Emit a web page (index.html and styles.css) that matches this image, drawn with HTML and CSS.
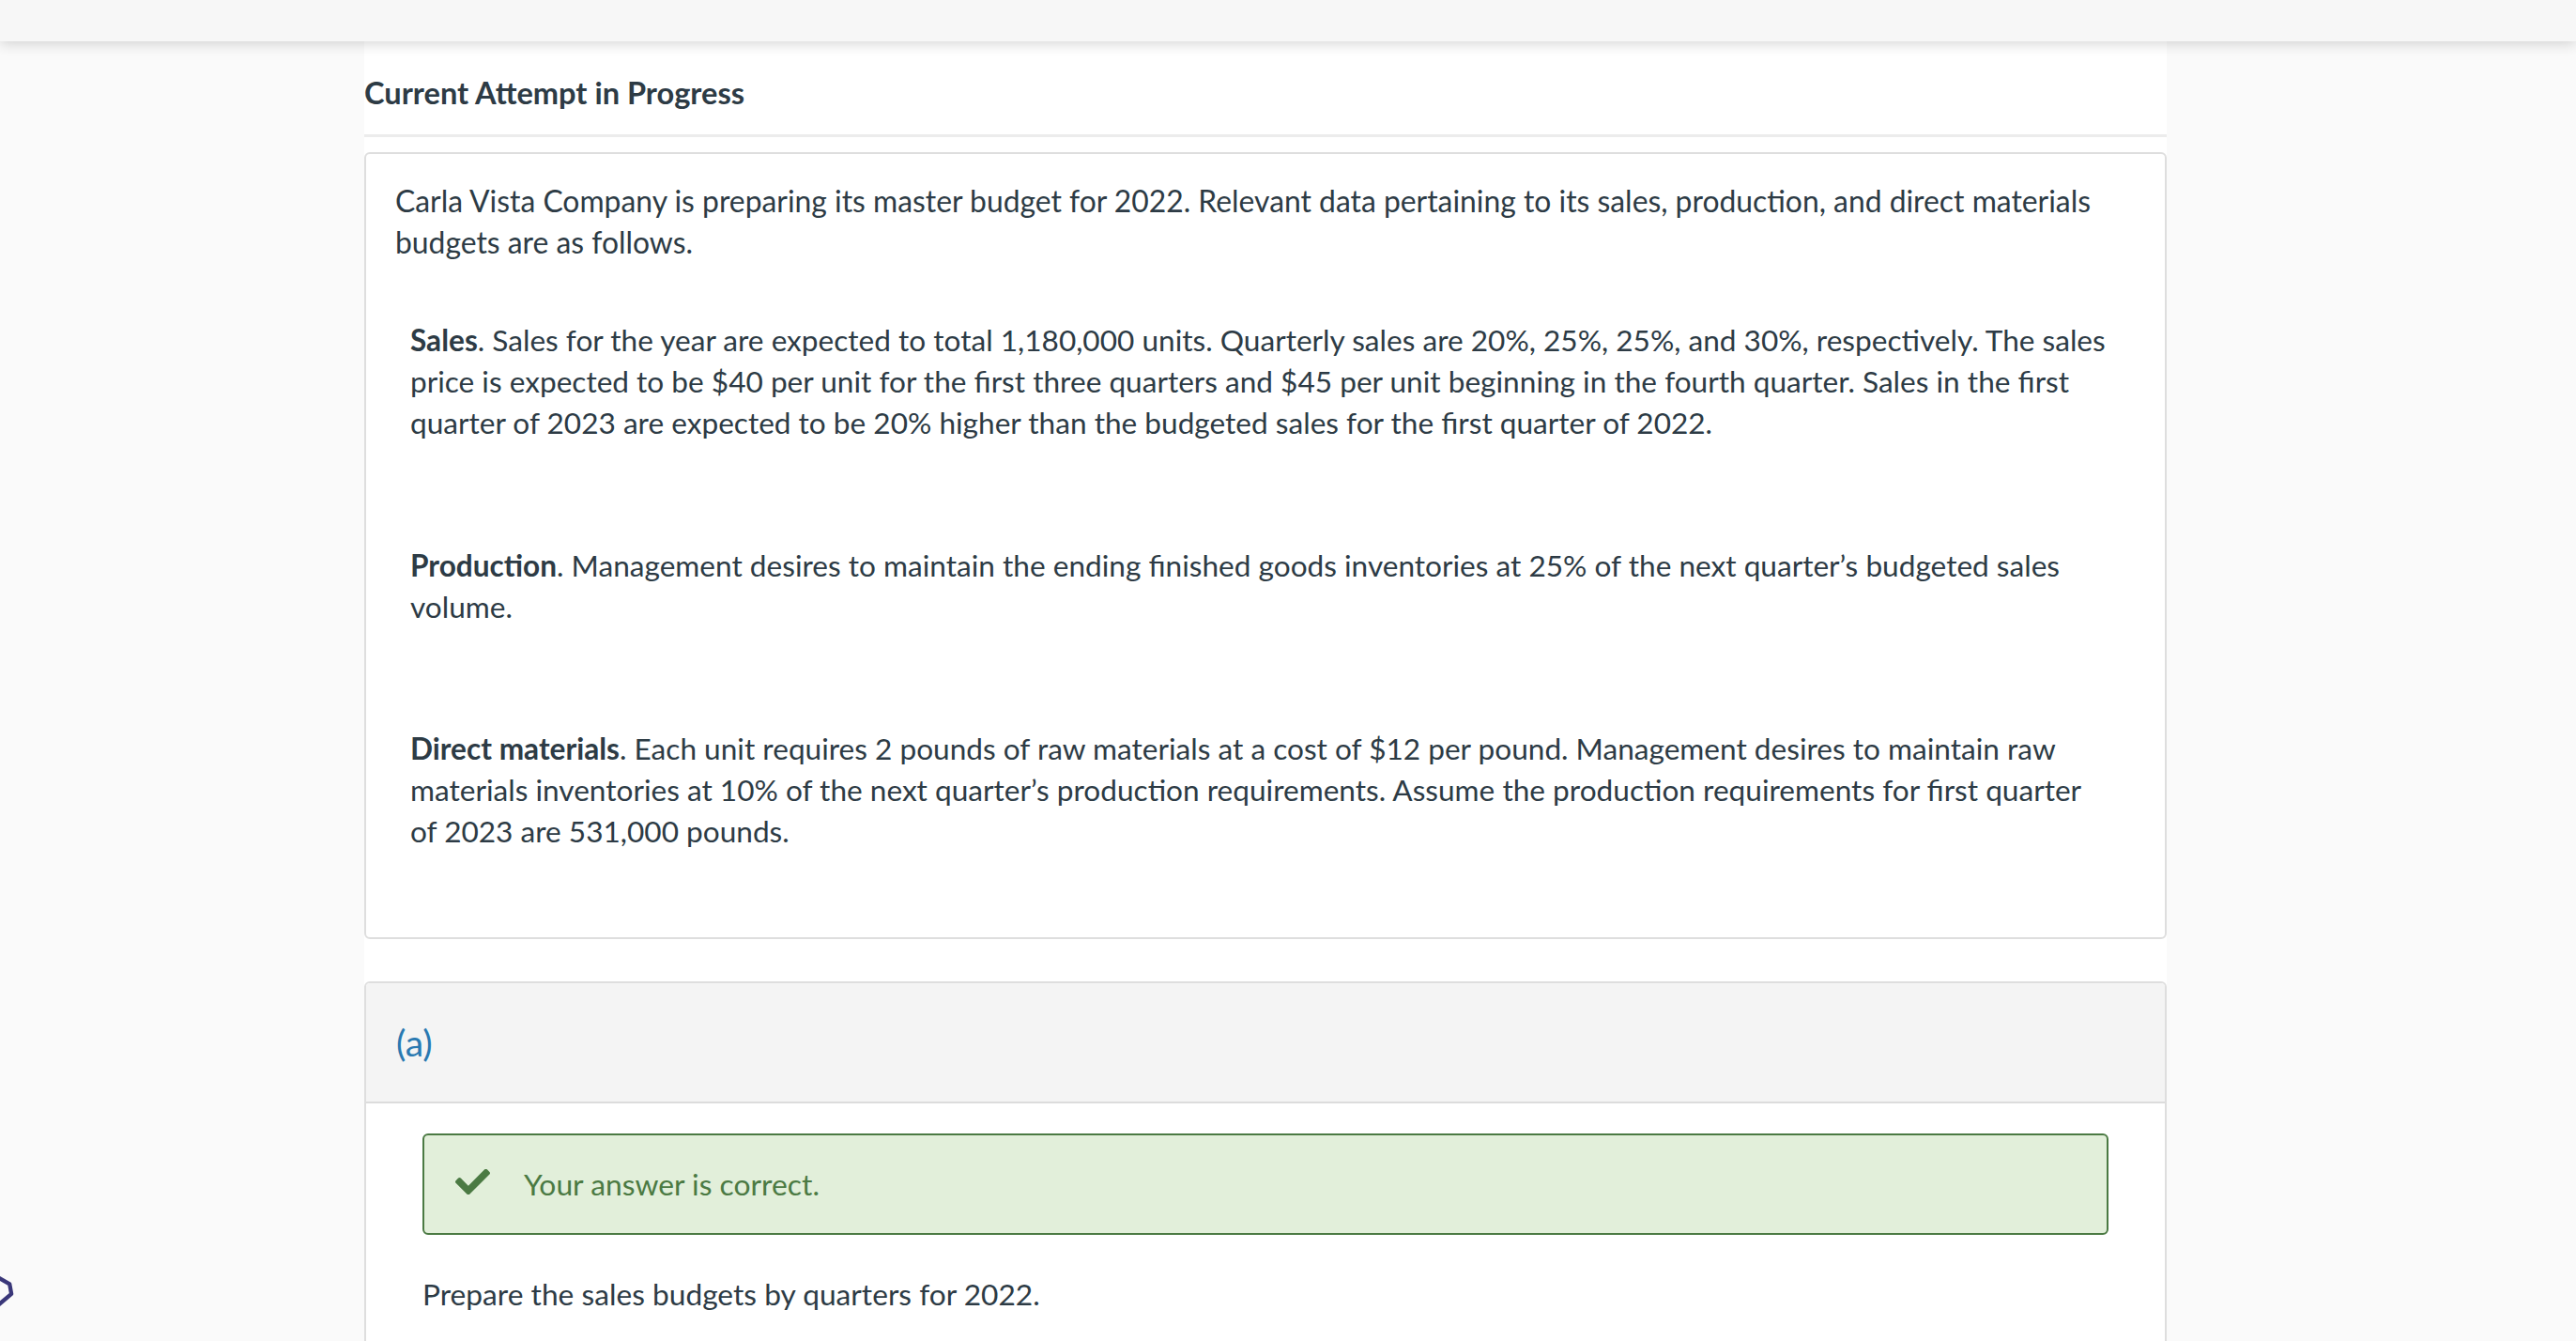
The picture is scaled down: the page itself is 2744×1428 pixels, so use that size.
FILE: index.html
```html
<!DOCTYPE html>
<html lang="en">
<head>
<meta charset="utf-8">
<title>Current Attempt in Progress</title>
<link rel="stylesheet" href="styles.css">
</head>
<body>
<header class="topbar"></header>
<div class="layout">
  <main class="main">
    <h1 class="attempt-title">Current Attempt in Progress</h1>
    <section class="card question">
      <p class="intro">Carla Vista Company is preparing its master budget for 2022. Relevant data pertaining to its sales, production, and direct materials budgets are as follows.</p>
      <p class="item item-sales"><strong>Sales</strong>. Sales for the year are expected to total 1,180,000 units. Quarterly sales are 20%, 25%, 25%, and 30%, respectively. The sales price is expected to be $40 per unit for the first three quarters and $45 per unit beginning in the fourth quarter. Sales in the first quarter of 2023 are expected to be 20% higher than the budgeted sales for the first quarter of 2022.</p>
      <p class="item item-prod"><strong>Production</strong>. Management desires to maintain the ending finished goods inventories at 25% of the next quarter’s budgeted sales volume.</p>
      <p class="item item-dm"><strong>Direct materials</strong>. Each unit requires 2 pounds of raw materials at a cost of $12 per pound. Management desires to maintain raw materials inventories at 10% of the next quarter’s production requirements. Assume the production requirements for first quarter of 2023 are 531,000 pounds.</p>
    </section>
    <section class="card part">
      <div class="part-head"><span class="part-label">(a)</span></div>
      <div class="part-body">
        <div class="feedback">
          <svg class="check" viewBox="0 0 512 370" aria-hidden="true"><path transform="translate(0,-70)" d="M173.898 439.404l-166.4-166.4c-9.997-9.997-9.997-26.206 0-36.204l36.203-36.204c9.997-9.998 26.207-9.998 36.204 0L192 312.69 432.095 72.596c9.997-9.997 26.207-9.997 36.204 0l36.203 36.204c9.997 9.997 9.997 26.206 0 36.204l-294.4 294.401c-9.998 9.997-26.207 9.997-36.204-.001z"/></svg>
          <span class="feedback-text">Your answer is correct.</span>
        </div>
        <p class="prompt">Prepare the sales budgets by quarters for 2022.</p>
      </div>
    </section>
  </main>
</div>
<svg class="side-badge" viewBox="0 0 44 44" aria-hidden="true"><path d="M22 3 L39 13 L41 24 L22 40 L5 24 L7 13 Z" fill="none" stroke="#3a3779" stroke-width="4.5" stroke-linejoin="round"/></svg>
</body>
</html>
```
FILE: styles.css
```css
html, body {
  margin: 0;
  padding: 0;
}
body {
  background: #fafafa;
  font-family: Lato, "Open Sans", "Liberation Sans", sans-serif;
  color: #2d3b45;
  min-height: 1428px;
  overflow: hidden;
}
.topbar {
  height: 44px;
  background: #f7f7f7;
  box-shadow: 0 3px 14px rgba(0, 0, 0, 0.16);
  position: relative;
  z-index: 2;
}
.layout {
  display: flex;
}
.main {
  margin-left: 388px;
  width: 1920px;
  background: #fff;
  min-height: 1384px;
}
.attempt-title {
  margin: 0;
  padding: 35px 0 25px;
  font-size: 32.6px;
  line-height: 1.2;
  font-weight: 700;
  color: #2d3b45;
  border-bottom: 3px solid #ececec;
}
.card {
  border: 2px solid #dedede;
  border-radius: 6px;
  background: #fff;
}
.question {
  margin-top: 16px;
  padding: 28px 31px 91px;
}
.question p {
  margin: 0;
  font-size: 31.6px;
  line-height: 44px;
}
.question .intro {
  font-size: 31.85px;
  margin-bottom: 60px;
}
.item {
  padding: 0 28px 0 16px;
}
.question .item-sales {
  margin-bottom: 108px;
}
.question .item-prod {
  margin-bottom: 107px;
}
.part {
  margin-top: 45px;
  overflow: hidden;
}
.part-head {
  height: 126px;
  background: #f4f4f4;
  border-bottom: 2px solid #dcdcdc;
  display: flex;
  align-items: center;
  padding-left: 32px;
}
.part-label {
  color: #2a79b1;
  font-size: 39px;
  line-height: 1;
}
.part-body {
  padding: 32px 60px 80px;
}
.feedback {
  height: 104px;
  border: 2px solid #4b7a43;
  border-radius: 6px;
  background: #e2efda;
  display: flex;
  align-items: center;
  padding-left: 33px;
}
.check {
  width: 37px;
  height: 27px;
  fill: #4b7a43;
  margin-right: 36px;
  margin-top: -6px;
}
.feedback-text {
  font-size: 31.8px;
  color: #4b7a43;
}
.prompt {
  margin: 41px 0 0;
  font-size: 31.7px;
  line-height: 44px;
}
.side-badge {
  position: absolute;
  left: -27px;
  top: 1355px;
  width: 42px;
  height: 42px;
}
```
